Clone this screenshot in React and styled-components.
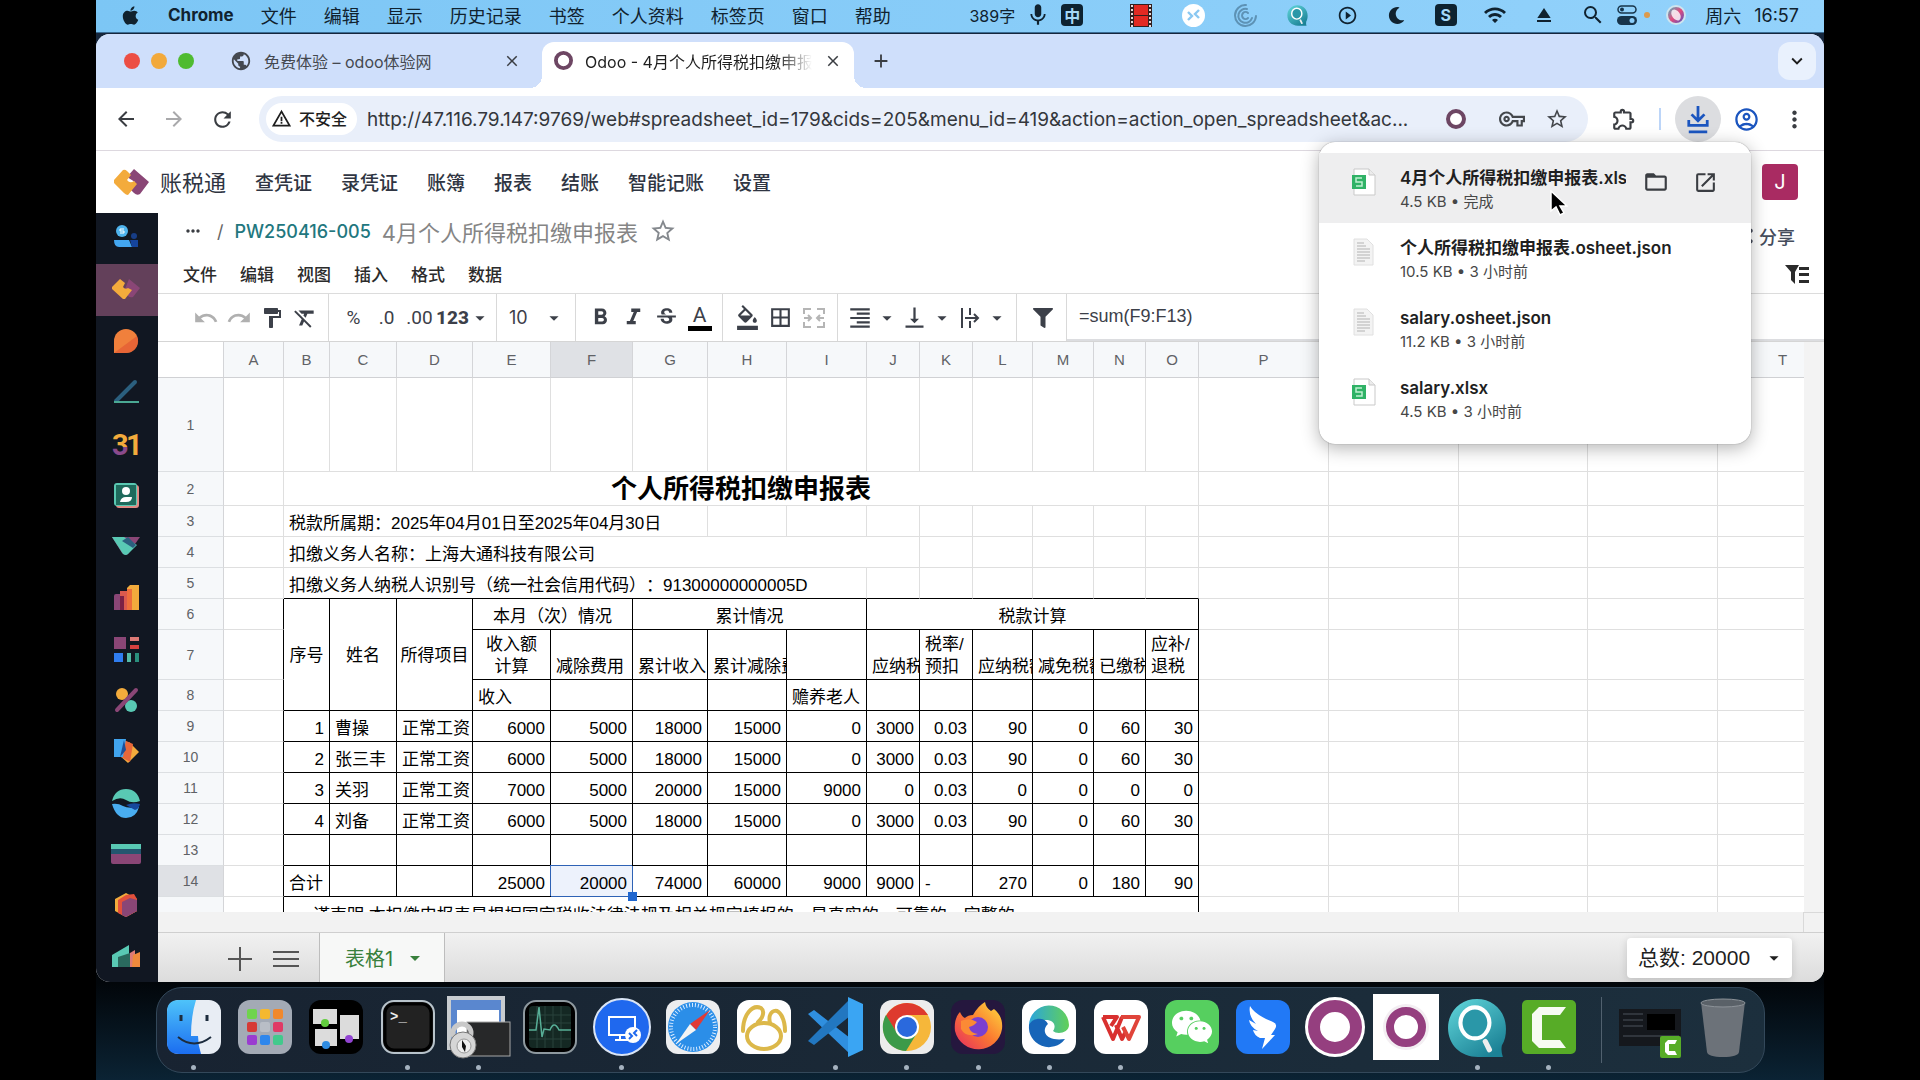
import React from 'react';
import styled, { createGlobalStyle } from 'styled-components';
import { FaApple, FaFilter, FaWeixin, FaMoon } from 'react-icons/fa';
import {
  MdArrowBack, MdArrowForward, MdRefresh, MdOutlineExtension, MdMoreVert, MdOutlineVpnKey,
  MdStarBorder, MdUndo, MdRedo, MdFormatPaint, MdFormatClear, MdFormatBold, MdFormatItalic,
  MdStrikethroughS, MdFormatColorFill, MdBorderAll, MdFormatAlignRight, MdVerticalAlignBottom,
  MdArrowDropDown, MdPublic, MdFolderOpen, MdOpenInNew, MdMic, MdWifi, MdEject, MdSearch,
  MdWarningAmber, MdPlayCircleOutline, MdClose, MdAdd, MdKeyboardArrowDown,
  MdMoreHoriz, MdShare, MdOutlineAccountCircle,
} from 'react-icons/md';

const sheetColumns = [
  ['A', 60], ['B', 46], ['C', 67], ['D', 76], ['E', 78], ['F', 82], ['G', 75], ['H', 79],
  ['I', 80], ['J', 53], ['K', 53], ['L', 60], ['M', 61], ['N', 52], ['O', 53], ['P', 130],
  ['Q', 130], ['R', 129], ['S', 130], ['T', 130],
];

const employees = [
  [9, '1', '曹操', '正常工资', '6000', '5000', '18000', '15000', '0', '3000', '0.03', '90', '0', '60', '30'],
  [10, '2', '张三丰', '正常工资', '6000', '5000', '18000', '15000', '0', '3000', '0.03', '90', '0', '60', '30'],
  [11, '3', '关羽', '正常工资', '7000', '5000', '20000', '15000', '9000', '0', '0.03', '0', '0', '0', '0'],
  [12, '4', '刘备', '正常工资', '6000', '5000', '18000', '15000', '0', '3000', '0.03', '90', '0', '60', '30'],
];

const downloads = [
  { name: '4月个人所得税扣缴申报表.xlsx', info: '4.5 KB • 完成', kind: 'xlsx', active: true },
  { name: '个人所得税扣缴申报表.osheet.json', info: '10.5 KB • 3 小时前', kind: 'json' },
  { name: 'salary.osheet.json', info: '11.2 KB • 3 小时前', kind: 'json' },
  { name: 'salary.xlsx', info: '4.5 KB • 3 小时前', kind: 'xlsx' },
];

/* ---------- small drawings ---------- */

const Ring = ({ size }) => (
  <svg width={size} height={size} viewBox="0 0 20 20">
    <circle cx="10" cy="10" r="8" fill="#fff" stroke="#6d4663" strokeWidth="4" />
  </svg>
);

const HandsLogo = ({ width, height }) => (
  <svg width={width} height={height} viewBox="0 0 36 26">
    <path d="M21 0 L36 13 L27 25 Q24 27 21 24 L16 19 L22 13 L14 8 Z" fill="#8a4676" />
    <path d="M1 11 L10 1 Q12 0 14 2 L18 6 L14 11 Q17 15 21 12 L24 15 L15 26 Q13 26 11 24 L1 14 Z" fill="#f3ab3c" />
  </svg>
);

const FilmIcon = () => (
  <svg width="22" height="23" viewBox="0 0 22 23">
    <rect width="22" height="23" fill="#33201f" />
    <rect x="4" y="1" width="14" height="10" fill="#e22a22" />
    <rect x="4" y="12" width="14" height="10" fill="#e22a22" />
    <path d="M2 1V23M20 1V23" stroke="#e9dcdc" strokeWidth="2" strokeDasharray="2 2" />
  </svg>
);

const RemoteIcon = () => (
  <svg width="23" height="23" viewBox="0 0 23 23">
    <circle cx="11.5" cy="11.5" r="11.5" fill="#fff" />
    <path d="M6 8l4 4-4 4M17 6l-4 4 4 4" fill="none" stroke="#8ac8f2" strokeWidth="2.4" />
  </svg>
);

const SpiralIcon = () => (
  <svg width="23" height="23" viewBox="0 0 23 23" fill="none" stroke="#5d92b5" strokeWidth="2" strokeLinecap="round">
    <path d="M12 1A10.500 10.500 0 1 0 22 12" />
    <path d="M13 5A7 7 0 1 0 18 14" />
    <path d="M14 9A3.500 3.500 0 1 0 14 14" />
  </svg>
);

const QIcon = ({ size, height }) => (
  <svg width={size} height={height || size} viewBox="0 0 58 58">
    <defs>
      <linearGradient id="q" x1="0" y1="0" x2="0.700" y2="1">
        <stop offset="0" stopColor="#62d8dc" />
        <stop offset="1" stopColor="#1c8296" />
      </linearGradient>
    </defs>
    <path d="M29 1C13 1 1 13 1 29s12 28 29 28h24q-2-5-1-11c3-5 4-10 4-16C57 13 45 1 29 1z" fill="url(#q)" />
    <ellipse cx="27" cy="24" rx="14" ry="15" fill="#2a97a8" stroke="#fff" strokeWidth="4" />
    <path d="M37 42l4 8" stroke="#eee" strokeWidth="5" strokeLinecap="round" />
  </svg>
);

const ControlIcon = () => (
  <svg width="20" height="20" viewBox="0 0 20 20">
    <rect x="1" y="1" width="18" height="7" rx="3.500" fill="none" stroke="#17344a" strokeWidth="1.500" />
    <circle cx="5" cy="4.500" r="2" fill="#17344a" />
    <rect x="0" y="11" width="20" height="9" rx="4.500" fill="#17344a" />
    <circle cx="15" cy="15.500" r="2.500" fill="#8ccdf8" />
  </svg>
);

const SiriIcon = () => (
  <svg width="20" height="20" viewBox="0 0 20 20">
    <defs>
      <linearGradient id="siri" x1="0" y1="0" x2="1" y2="1">
        <stop offset="0" stopColor="#38c6c8" />
        <stop offset="0.500" stopColor="#e24b7d" />
        <stop offset="1" stopColor="#3b55c9" />
      </linearGradient>
    </defs>
    <circle cx="10" cy="10" r="9" fill="url(#siri)" stroke="#cfe4ee" strokeWidth="2" />
    <ellipse cx="10" cy="10" rx="4" ry="6" fill="#fff" opacity="0.800" transform="rotate(-35 10 10)" />
  </svg>
);

const DownloadIcon = () => (
  <svg width="24" height="32" viewBox="0 0 26 32" fill="none" stroke="#1b55bf" strokeWidth="3">
    <path d="M13 2v15M6 11l7 7 7-7M3 17v6h20v-6M3 30h20" />
  </svg>
);

const MergeIcon = () => (
  <svg width="22" height="22" viewBox="0 0 22 22" fill="none" stroke="#b5b5b5" strokeWidth="2">
    <path d="M1 7V2h7M14 2h7v5M21 15v5h-7M8 20H1v-5M1 11h7M21 11h-7M5 8l3 3-3 3M17 8l-3 3 3 3" />
  </svg>
);

const WrapIcon = () => (
  <svg width="20" height="22" viewBox="0 0 20 22" fill="none" stroke="#3c4049" strokeWidth="2">
    <path d="M2 1v20M10 1v7M10 14v7M5 11h13M14 7l4 4-4 4" />
  </svg>
);

const ListFilterIcon = () => (
  <svg width="24" height="20" viewBox="0 0 24 20" fill="#2b2b2b">
    <path d="M0 0h14l-4 7v12l-4-4V7zM14 2h10v3H14zM14 8h10v3H14zM14 15h10v3H14z" />
  </svg>
);

const FileIcon = ({ kind }) => (kind === 'xlsx' ? (
  <svg width="26" height="28" viewBox="0 0 26 28">
    <path d="M3 1h15l6 6v20H3z" fill="#fff" stroke="#c9c9c9" />
    <path d="M18 1v6h6" fill="#ececec" stroke="#c9c9c9" />
    <rect x="1" y="7" width="14" height="14" fill="#2fb266" />
    <path d="M11 10H5v4h6v4H5" fill="none" stroke="#bff0d0" strokeWidth="1.500" />
  </svg>
) : (
  <svg width="26" height="28" viewBox="0 0 26 28">
    <path d="M3 1h13l6 6v20H3z" fill="#f3f3f3" stroke="#e0e0e0" />
    <path d="M6 5h7M6 8h9M6 11h13M6 14h13M6 17h13M6 20h13M6 23h8" stroke="#b3b3b3" />
  </svg>
));

const Pointer = () => (
  <svg width="18" height="26" viewBox="0 0 18 26">
    <path d="M1 1v20l5-4 4 8 4-2-4-7h7z" fill="#000" stroke="#fff" strokeWidth="1.500" />
  </svg>
);

const appIcons = [
  <g key="pay">
    <circle cx="11" cy="7" r="6" fill="#4fb4ee" /><path d="M13 5H9v2h4v2H9" stroke="#fff" fill="none" />
    <path d="M3 16h15l3 7H8q-5 0-5-7z" fill="#43a6f0" /><circle cx="23" cy="12" r="3" fill="#173d86" />
    <path d="M19 16h8v7h-6z" fill="#15449c" />
  </g>,
  <g key="tax">
    <path d="M18 4l11 9-7 9q-3 1-5-1l-3-7z" fill="#8a4676" />
    <path d="M1 12L9 4l5 4-2 4q2 3 5 1l4 2-7 9h-2L1 14z" fill="#f3ab3c" />
  </g>,
  <g key="chat">
    <path d="M3 27V15A12 12 0 1 1 15 27z" fill="#f0803c" /><path d="M26 10A12 12 0 0 1 15 27H3z" fill="#e35a33" opacity="0.700" />
  </g>,
  <g key="sign">
    <path d="M5 24L24 5" stroke="#2b5f7e" strokeWidth="4" strokeLinecap="round" /><path d="M3 25h25" stroke="#4aa893" strokeWidth="2" />
  </g>,
  <g key="calendar">
    <defs>
      <linearGradient id="cal" x1="0" y1="0" x2="0" y2="1">
        <stop offset="0.550" stopColor="#f3ab3c" /><stop offset="0.550" stopColor="#8a4a8c" />
      </linearGradient>
    </defs>
    <text x="1" y="26" fontSize="29" fontWeight="700" fontFamily="Roboto, sans-serif" fill="url(#cal)">3</text>
    <text x="15" y="26" fontSize="29" fontWeight="700" fontFamily="Roboto, sans-serif" fill="#f3ab3c">1</text>
  </g>,
  <g key="contacts">
    <rect x="5" y="5" width="23" height="23" rx="3" fill="#e08a83" /><rect x="3" y="3" width="23" height="23" rx="3" fill="#5ac8b2" />
    <rect x="5" y="5" width="20" height="20" fill="#1f6a5c" /><circle cx="15" cy="11" r="4" fill="#fff" />
    <path d="M9 22q1-5 6-5h6q0 5-6 5z" fill="#fff" />
  </g>,
  <g key="crm">
    <path d="M1 6h28L17 23q-3 2-6-1z" fill="#8a4676" /><path d="M1 6h12l13 8-9 9q-2 2-5 0z" fill="#59c9b4" />
    <path d="M11 10l6-4 8 8-3 3z" fill="#2b5f7e" />
  </g>,
  <g key="sales">
    <path d="M3 14q0-2 2-2h7v16H3z" fill="#8a4676" /><path d="M9 9h8v19H9z" fill="#db5a4e" />
    <path d="M9 14h4v14H9z" fill="#7b2145" /><path d="M16 6l3-3h9v25H16z" fill="#f3ab3c" /><path d="M16 7h5v21h-5z" fill="#ee6e3c" />
  </g>,
  <g key="boards">
    <rect x="3" y="3" width="12" height="12" fill="#8a4676" /><rect x="19" y="3" width="9" height="4" fill="#dd7a76" />
    <rect x="19" y="11" width="9" height="4" fill="#d8413f" /><rect x="3" y="19" width="9" height="9" fill="#2f7df0" />
    <rect x="16" y="19" width="4" height="9" fill="#54bba8" /><rect x="24" y="19" width="4" height="9" fill="#2a8f7d" />
  </g>,
  <g key="percent">
    <circle cx="11" cy="9" r="6" fill="#f3ab3c" /><circle cx="20" cy="21" r="6" fill="#59c9b4" />
    <path d="M6 25L25 5" stroke="#8a4676" strokeWidth="4" strokeLinecap="round" />
  </g>,
  <g key="cards">
    <path d="M18 6l10 10-11 11-9-8z" fill="#f3ab3c" /><path d="M13 4l9 4-3 18-9-5z" fill="#e8673a" />
    <path d="M3 3h12l-3 18H3z" fill="#41a4ee" /><path d="M13 4l2 10-6 7z" fill="#1d4f9a" />
  </g>,
  <g key="wave">
    <path d="M1 13Q4 1 15 1t14 12q-8 3-14-1T1 13z" fill="#59c9b4" /><path d="M1 16q6-1 11 2t16 1q-3 11-13 11T1 16z" fill="#49adf0" />
    <path d="M15 17q7-3 14-1-1 5-5 6z" fill="#16489c" />
  </g>,
  <g key="card">
    <rect x="0" y="5" width="30" height="5" fill="#59c9b4" /><rect x="0" y="10" width="30" height="5" fill="#23566f" />
    <path d="M0 15h30v8q0 2-2 2H2q-2 0-2-2z" fill="#8a4676" />
  </g>,
  <g key="hexagon">
    <path d="M15 3l11 6v12l-11 6-11-6V9z" fill="#f3ab3c" /><path d="M15 5l8-1 3 5v12l-11 6-8-4V10z" fill="#e3503b" />
    <path d="M19 8l7 2v11l-11 6-4-2V12z" fill="#8a4676" />
  </g>,
  <g key="stock">
    <path d="M1 14L18 4v22H1z" fill="#59c9b4" /><path d="M7 16l12-4v14H7z" fill="#2a6a5e" />
    <path d="M19 12l5-3v17h-5z" fill="#dd7a76" /><path d="M22 14l7-3v15h-8z" fill="#ee8a3c" />
  </g>,
];

const dockIcons = [
  { name: '访达', running: true, art: (
    <>
      <defs><linearGradient id="fi" x1="0" y1="0" x2="0" y2="1"><stop offset="0" stopColor="#4ec3fa" /><stop offset="1" stopColor="#1b6df0" /></linearGradient></defs>
      <rect x="3" y="3" width="54" height="54" rx="12" fill="#e8edf4" />
      <path d="M32 3H15Q3 3 3 15v30q0 12 12 12h22q-3-9-3-18h-7q0-20 5-36z" fill="url(#fi)" />
      <path d="M17 18v6M43 18v6" stroke="#1d2c3d" strokeWidth="3" /><path d="M14 40q16 13 33 0" fill="none" stroke="#1d2c3d" strokeWidth="2" />
    </>
  ) },
  { name: '启动台', art: (
    <>
      <rect x="3" y="3" width="54" height="54" rx="12" fill="#a3aab5" />
      {['#6fd44d', '#f5b82f', '#f0882c', '#d63a35', '#b9bec6', '#e03a66', '#9a3cd0', '#2d86ec', '#41c98c'].map((c, i) => (
        <rect key={c} x={12 + (i % 3) * 13} y={12 + Math.floor(i / 3) * 13} width="10" height="10" rx="2" fill={c} />
      ))}
    </>
  ) },
  { name: '窗口', art: (
    <>
      <rect x="3" y="3" width="54" height="54" rx="12" fill="#000" />
      <rect x="7" y="12" width="24" height="15" fill="#dcdcdc" /><rect x="34" y="18" width="19" height="24" fill="#dcdcdc" />
      <rect x="9" y="32" width="22" height="17" fill="#dcdcdc" />
      <circle cx="19" cy="26" r="4" fill="#62ce3e" /><circle cx="43" cy="42" r="4" fill="#9244d2" /><circle cx="20" cy="48" r="4" fill="#2f8be0" />
    </>
  ) },
  { name: '终端', running: true, art: (
    <>
      <rect x="4" y="4" width="52" height="52" rx="12" fill="#1f1f20" stroke="#b8c3cb" strokeWidth="2" />
      <rect x="7" y="7" width="46" height="46" rx="9" fill="#222" stroke="#000" strokeWidth="3" />
      <text x="12" y="24" fontSize="14" fontWeight="700" fontFamily="Liberation Mono, monospace" fill="#eee">&gt;_</text>
    </>
  ) },
  { name: '屏幕锁定', running: true, art: (
    <>
      <rect x="-2" y="-1" width="58" height="54" fill="#c8ccd0" /><rect x="2" y="3" width="50" height="42" fill="#5a87cf" />
      <rect x="8" y="13" width="42" height="30" fill="#fff" /><rect x="18" y="25" width="43" height="34" fill="#272829" stroke="#a7a7a7" />
      <circle cx="13" cy="36" r="9" fill="none" stroke="#c9c9c9" strokeWidth="5" />
      <circle cx="14" cy="48" r="13" fill="#d6d6d6" stroke="#777" /><circle cx="15" cy="49" r="7" fill="#eee" stroke="#999" />
      <path d="M13 43l4 6-1 6-3-5z" fill="#111" />
    </>
  ) },
  { name: '活动监视器', art: (
    <>
      <rect x="4" y="4" width="52" height="52" rx="12" fill="#000" stroke="#8e999f" strokeWidth="2" />
      <rect x="9" y="9" width="42" height="42" rx="4" fill="#142823" />
      <path d="M9 18h42M9 26h42M9 42h42M17 9v42M25 9v42M33 9v42M41 9v42" stroke="#28423c" />
      <path d="M9 33h7l3-23 3 30 2-8 6 1q4-10 9 0h12" fill="none" stroke="#57ae96" strokeWidth="1.500" />
    </>
  ) },
  { name: '远程桌面', running: true, art: (
    <>
      <circle cx="30" cy="30" r="28" fill="#1f68ee" stroke="#d9e4f5" strokeWidth="2" />
      <path d="M17 20h26v18H17zM23 43h14M28 38v5" fill="none" stroke="#fff" strokeWidth="2" />
      <circle cx="41" cy="38" r="8" fill="#fff" /><path d="M37 36l3 3-3 3M45 33l-3 3 3 3" fill="none" stroke="#1f68ee" strokeWidth="2" />
    </>
  ) },
  { name: 'Safari', art: (
    <>
      <rect x="3" y="3" width="54" height="54" rx="12" fill="#ecedef" /><circle cx="30" cy="30" r="25" fill="#2b8ee8" />
      <circle cx="30" cy="30" r="22" fill="none" stroke="#dcecff" strokeWidth="4" strokeDasharray="1 2" />
      <path d="M47 13L27 27l6 6z" fill="#e03a36" /><path d="M13 47l14-20 6 6z" fill="#f4f4f4" />
    </>
  ) },
  { name: 'Navicat', art: (
    <>
      <rect x="3" y="3" width="54" height="54" rx="12" fill="#fff" />
      <g fill="none" stroke="#dcb84a" strokeWidth="4" strokeLinecap="round">
        <ellipse cx="30" cy="39" rx="17" ry="13" /><path d="M9 34c0-16 9-27 18-23 4 3 2 10-3 14" />
        <path d="M51 34c0-13-6-22-11-20-5 2-5 8-4 12" />
      </g>
    </>
  ) },
  { name: 'VS Code', running: true, art: (
    <>
      <path d="M3 17l6-4 36 28v16z" fill="#2f8fdf" /><path d="M3 44l6 4L45 19V2z" fill="#2277c0" />
      <path d="M43 0l15 7v46l-15 7z" fill="#3aa5f3" />
    </>
  ) },
  { name: 'Chrome', running: true, art: (
    <>
      <rect x="3" y="3" width="54" height="54" rx="12" fill="#ececec" />
      <circle cx="30" cy="30" r="24" fill="#f6b73a" />
      <path d="M30 6a24 24 0 0 0-21 13l11 17 10-18h21A24 24 0 0 0 30 6z" fill="#de3a2e" />
      <path d="M9 18a24 24 0 0 0 20 36l11-18H20z" fill="#3c9a49" />
      <circle cx="30" cy="30" r="12" fill="#fff" /><circle cx="30" cy="30" r="10" fill="#2a69dd" />
    </>
  ) },
  { name: 'Firefox', running: true, art: (
    <>
      <defs><linearGradient id="ff" x1="1" y1="0" x2="0" y2="1"><stop offset="0" stopColor="#fde13e" /><stop offset="0.500" stopColor="#fb7a30" /><stop offset="1" stopColor="#e52a62" /></linearGradient></defs>
      <rect x="3" y="3" width="54" height="54" rx="12" fill="#25173e" />
      <path d="M12 15q2 5 5 6 3-3 8-3 5-9 12-13 1 6 6 9l3-2c6 5 9 11 8 20a24 24 0 0 1-47 2c-1-8 1-15 5-19z" fill="url(#ff)" />
      <circle cx="30" cy="30" r="10" fill="#7a3fd0" /><path d="M13 24q8-4 16 1-3 4-8 5 1 6 9 7-12 4-17-5z" fill="#fb8a35" />
    </>
  ) },
  { name: 'Edge', running: true, art: (
    <>
      <defs><linearGradient id="ed" x1="0" y1="0" x2="1" y2="0"><stop offset="0" stopColor="#2aa5dc" /><stop offset="1" stopColor="#62d058" /></linearGradient></defs>
      <rect x="3" y="3" width="54" height="54" rx="12" fill="#fff" />
      <path d="M10 29a20 20 0 0 1 40-1c0 8-12 10-16 6 4-6 0-11-7-11-8 0-17 3-17 10z" fill="url(#ed)" />
      <path d="M10 28c4-8 16-8 19-1-7 6-3 18 17 15A20 20 0 0 1 10 28z" fill="#1765b8" />
    </>
  ) },
  { name: 'WPS', running: true, art: (
    <>
      <rect x="3" y="3" width="54" height="54" rx="12" fill="#fff" />
      <path d="M12 20h14l-6 9M12 20l10 22 9-22M25 28l6 14 3-6" fill="none" stroke="#d9302f" strokeWidth="4" strokeLinejoin="round" />
      <path d="M30 20h18L38 42l-6-12" fill="none" stroke="#e0443a" strokeWidth="4" strokeLinejoin="round" />
    </>
  ) },
  { name: '微信', art: (
    <>
      <rect x="3" y="3" width="54" height="54" rx="12" fill="#56cf5f" />
      <g color="#fff"><FaWeixin x="9" y="9" size="42" /></g>
    </>
  ) },
  { name: '钉钉', art: (
    <>
      <rect x="3" y="3" width="54" height="54" rx="12" fill="#2179f6" />
      <path d="M17 9q5 9 23 16 5 2 2 7l-4 6h4L29 52l3-11h-5q-6-3-7-8l5 1q-8-4-9-11l7 4Q15 19 17 9z" fill="#fff" />
    </>
  ) },
  { name: 'Odoo', art: (
    <><circle cx="30" cy="30" r="30" fill="#fff" /><circle cx="30" cy="30" r="21" fill="#fff" stroke="#953f7f" strokeWidth="12" /></>
  ) },
  { name: 'Odoo 应用', art: (
    <><rect x="-3" y="-3" width="66" height="66" fill="#fff" /><circle cx="30" cy="30" r="23" fill="#f3eef2" /><circle cx="30" cy="30" r="16" fill="#fff" stroke="#953f7f" strokeWidth="8" /></>
  ) },
  { name: '截图', running: true, art: <QIcon size="60" height="62" /> },
  { name: 'Camtasia', running: true, art: (
    <>
      <rect x="3" y="3" width="54" height="54" rx="5" fill="#57ac27" />
      <path d="M47 10H20l-7 7v27l7 7h27l-6-8H23V18h18z" fill="#f6fbf2" />
    </>
  ) },
];

/* ---------- grid pieces ---------- */

const EmptyCells = ({ count }) => Array.from({ length: count }, (_, i) => <Cell key={i} />);

const LinedRow = ({ number, children, height = 31, selected }) => (
  <GridRow $height={height}>
    <RowHead scope="row" $selected={selected}>{number}</RowHead>
    {children}
  </GridRow>
);

const Sheet = () => (
  <SheetTable>
    <colgroup>
      <SheetCol $width={66} />
      {sheetColumns.map(([letter, width]) => <SheetCol key={letter} $width={width} />)}
    </colgroup>
    <thead>
      <GridRow $height={36}>
        <Corner />
        {sheetColumns.map(([letter]) => <ColHead key={letter} scope="col" $selected={letter === 'F'}>{letter}</ColHead>)}
      </GridRow>
    </thead>
    <tbody>
      <LinedRow number="1" height={94}><EmptyCells count={20} /></LinedRow>
      <LinedRow number="2" height={34}>
        <Cell />
        <TitleCell colSpan={14}>个人所得税扣缴申报表</TitleCell>
        <EmptyCells count={5} />
      </LinedRow>
      <LinedRow number="3">
        <Cell />
        <Cell colSpan={6}>税款所属期：2025年04月01日至2025年04月30日</Cell>
        <EmptyCells count={13} />
      </LinedRow>
      <LinedRow number="4">
        <Cell />
        <Cell colSpan={9}>扣缴义务人名称：上海大通科技有限公司</Cell>
        <EmptyCells count={10} />
      </LinedRow>
      <LinedRow number="5">
        <Cell />
        <Cell colSpan={8} $under>扣缴义务人纳税人识别号（统一社会信用代码）：91300000000005D</Cell>
        {Array.from({ length: 6 }, (_, i) => <Cell key={i} $under />)}
        <EmptyCells count={5} />
      </LinedRow>
      <LinedRow number="6">
        <Cell $side />
        <Cell rowSpan={3} $boxed $align="center" $middle>序号</Cell>
        <Cell rowSpan={3} $boxed $align="center" $middle>姓名</Cell>
        <Cell rowSpan={3} $boxed $align="center" $middle>所得项目</Cell>
        <Cell colSpan={2} $boxed $align="center">本月（次）情况</Cell>
        <Cell colSpan={3} $boxed $align="center">累计情况</Cell>
        <Cell colSpan={6} $boxed $align="center">税款计算</Cell>
        <EmptyCells count={5} />
      </LinedRow>
      <LinedRow number="7" height={50}>
        <Cell $side />
        <Cell $boxed $align="center">收入额<br />计算</Cell>
        {['减除费用', '累计收入', '累计减除费', '', '应纳税'].map((text) => <Cell key={text} $boxed>{text}</Cell>)}
        <Cell $boxed>税率/<br />预扣</Cell>
        <Cell $boxed>应纳税额</Cell>
        <Cell $boxed>减免税额</Cell>
        <Cell $boxed>已缴税</Cell>
        <Cell $boxed>应补/<br />退税</Cell>
        <EmptyCells count={5} />
      </LinedRow>
      <LinedRow number="8">
        <Cell $side />
        {['收入', '', '', '', '赡养老人', '', '', '', '', '', ''].map((text, i) => <Cell key={i} $boxed>{text}</Cell>)}
        <EmptyCells count={5} />
      </LinedRow>
      {employees.map(([number, ...values]) => (
        <LinedRow key={number} number={number}>
          <Cell $side />
          {values.map((value, i) => (
            <Cell key={i} $boxed $align={i === 1 || i === 2 ? 'left' : 'right'}>{value}</Cell>
          ))}
          <EmptyCells count={5} />
        </LinedRow>
      ))}
      <LinedRow number="13">
        <Cell $side />
        {Array.from({ length: 14 }, (_, i) => <Cell key={i} $boxed />)}
        <EmptyCells count={5} />
      </LinedRow>
      <LinedRow number="14" selected>
        <Cell $side />
        <Cell $boxed>合计</Cell>
        <Cell $boxed />
        <Cell $boxed />
        <Cell $boxed $align="right">25000</Cell>
        <SelectedCell $boxed $align="right">20000<Handle /></SelectedCell>
        {['74000', '60000', '9000', '9000', '-', '270', '0', '180', '90'].map((value, i) => (
          <Cell key={i} $boxed $align={value === '-' ? 'left' : 'right'}>{value}</Cell>
        ))}
        <EmptyCells count={5} />
      </LinedRow>
      <LinedRow number="">
        <Cell $side />
        <NoteCell colSpan={14} $boxed>谨声明:本扣缴申报表是根据国家税收法律法规及相关规定填报的，是真实的、可靠的、完整的。</NoteCell>
        <EmptyCells count={5} />
      </LinedRow>
    </tbody>
  </SheetTable>
);

const App = () => (
  <Screen>
    <GlobalStyle />
    <Desktop>
      <MenuBar>
        <MenuButton aria-label="苹果菜单"><FaApple size={21} /></MenuButton>
        <MenuButton $strong>Chrome</MenuButton>
        {['文件', '编辑', '显示', '历史记录', '书签', '个人资料', '标签页', '窗口', '帮助'].map((label) => (
          <MenuButton key={label}>{label}</MenuButton>
        ))}
        <StatusArea>
          <StatusText>389字</StatusText>
          <StatusSlot $width={46}><MdMic size={26} /></StatusSlot>
          <DarkBadge>中</DarkBadge>
          <StatusGap />
          <StatusSlot $width={52}><FilmIcon /></StatusSlot>
          <StatusSlot $width={52}><RemoteIcon /></StatusSlot>
          <StatusSlot $width={52}><SpiralIcon /></StatusSlot>
          <StatusSlot $width={52}><QIcon size="21" /></StatusSlot>
          <StatusSlot $width={49}><MdPlayCircleOutline size={21} /></StatusSlot>
          <StatusSlot $width={49}><FaMoon size={17} /></StatusSlot>
          <StatusSlot $width={49}><DarkBadge>S</DarkBadge></StatusSlot>
          <StatusSlot $width={49}><MdWifi size={24} /></StatusSlot>
          <StatusSlot $width={49}><MdEject size={24} /></StatusSlot>
          <StatusSlot $width={49}><MdSearch size={24} /></StatusSlot>
          <ControlIcon />
          <OrangeDot />
          <SiriIcon />
          <Clock><span>周六</span><span>16:57</span></Clock>
        </StatusArea>
      </MenuBar>

      <Window>
        <TabStrip>
          <Lights><Light $color="#ec4e44" aria-label="关闭" /><Light $color="#f2a93b" aria-label="最小化" /><Light $color="#4fbb30" aria-label="缩放" /></Lights>
          <Tab>
            <MdPublic size={22} />
            <TabTitle>免费体验 – odoo体验网</TabTitle>
            <IconButton aria-label="关闭标签页"><MdClose size={18} /></IconButton>
          </Tab>
          <Tab $active>
            <Ring size={19} />
            <TabTitle $fade>Odoo - 4月个人所得税扣缴申报表</TabTitle>
            <IconButton aria-label="关闭标签页"><MdClose size={18} /></IconButton>
          </Tab>
          <NewTab aria-label="新标签页"><MdAdd size={22} /></NewTab>
          <TabSearch aria-label="搜索标签页"><MdKeyboardArrowDown size={22} /></TabSearch>
        </TabStrip>

        <AddressRow>
          <NavButton aria-label="后退"><MdArrowBack size={24} /></NavButton>
          <NavButton aria-label="前进" disabled><MdArrowForward size={24} /></NavButton>
          <NavButton aria-label="重新加载"><MdRefresh size={25} /></NavButton>
          <AddressBar>
            <SiteChip><MdWarningAmber size={21} />不安全</SiteChip>
            <AddressInput
              aria-label="地址"
              readOnly
              value="http://47.116.79.147:9769/web#spreadsheet_id=179&cids=205&menu_id=419&action=action_open_spreadsheet&ac..."
            />
            <AddressIcons>
              <Ring size={20} />
              <MdOutlineVpnKey size={26} />
              <MdStarBorder size={24} />
            </AddressIcons>
          </AddressBar>
          <BrowserTools>
            <IconButton aria-label="扩展程序"><MdOutlineExtension size={26} /></IconButton>
            <ToolRule />
            <DownloadButton aria-label="下载"><DownloadIcon /></DownloadButton>
            <ProfileButton aria-label="个人资料"><MdOutlineAccountCircle size={27} /></ProfileButton>
            <IconButton aria-label="更多"><MdMoreVert size={27} /></IconButton>
          </BrowserTools>
        </AddressRow>

        <OdooNav>
          <HandsLogo width="36" height="26" />
          <Brand href="#home">账税通</Brand>
          <NavLinks>
            {['查凭证', '录凭证', '账簿', '报表', '结账', '智能记账', '设置'].map((label) => (
              <NavLink key={label} href="#menu">{label}</NavLink>
            ))}
          </NavLinks>
          <Avatar aria-label="用户">J</Avatar>
        </OdooNav>

        <Workspace>
          <AppRail>
            {appIcons.map((art, i) => (
              <RailLink key={art.key} href="#app" aria-label={art.key} $active={i === 1}>
                <svg width="30" height="30" viewBox="0 0 30 30">{art}</svg>
              </RailLink>
            ))}
          </AppRail>

          <Main>
            <Crumbs>
              <IconButton aria-label="更多"><MdMoreHoriz size={20} /></IconButton>
              <Slash>/</Slash>
              <CrumbLink href="#order">PW250416-005</CrumbLink>
              <DocTitle>4月个人所得税扣缴申报表</DocTitle>
              <StarButton aria-label="收藏"><MdStarBorder size={28} /></StarButton>
              <ShareButton><MdShare size={18} />分享</ShareButton>
            </Crumbs>
            <SheetMenu>
              {['文件', '编辑', '视图', '插入', '格式', '数据'].map((label) => <SheetMenuButton key={label}>{label}</SheetMenuButton>)}
              <FilterButton aria-label="筛选"><ListFilterIcon /></FilterButton>
            </SheetMenu>
            <Toolbar>
              <ToolGroup $width={171} $start={31}>
                <Tool $dim aria-label="撤销"><MdUndo size={26} /></Tool>
                <Tool $dim aria-label="重做"><MdRedo size={26} /></Tool>
                <Tool aria-label="格式刷"><MdFormatPaint size={24} /></Tool>
                <Tool aria-label="清除格式"><MdFormatClear size={26} /></Tool>
              </ToolGroup>
              <ToolGroup $width={168} $start={8}>
                <Tool>%</Tool>
                <Tool>.0</Tool>
                <Tool>.00</Tool>
                <Tool $heavy>123</Tool>
                <Caret size={22} />
              </ToolGroup>
              <ToolGroup $width={79} $start={12}>
                <SizeInput aria-label="字号" defaultValue="10" />
                <SizeCaret size={22} />
              </ToolGroup>
              <ToolGroup $width={147} $start={8}>
                <Tool aria-label="加粗"><MdFormatBold size={27} /></Tool>
                <Tool aria-label="斜体"><MdFormatItalic size={27} /></Tool>
                <Tool aria-label="删除线"><MdStrikethroughS size={25} /></Tool>
                <Tool><ColorLetter>A</ColorLetter></Tool>
              </ToolGroup>
              <ToolGroup $width={115} $start={8}>
                <Tool aria-label="填充颜色"><MdFormatColorFill size={25} /></Tool>
                <Tool aria-label="边框"><MdBorderAll size={25} /></Tool>
                <Tool $dim aria-label="合并单元格"><MergeIcon /></Tool>
              </ToolGroup>
              <ToolGroup $width={179} $start={5}>
                <Tool aria-label="水平对齐"><MdFormatAlignRight size={26} /></Tool>
                <Caret size={22} />
                <Tool aria-label="垂直对齐"><MdVerticalAlignBottom size={27} /></Tool>
                <Caret size={22} />
                <Tool aria-label="换行"><WrapIcon /></Tool>
                <Caret size={22} />
              </ToolGroup>
              <ToolGroup $width={50} $start={9}>
                <Tool aria-label="筛选"><FaFilter size={20} /></Tool>
              </ToolGroup>
              <FormulaInput aria-label="公式" defaultValue="=sum(F9:F13)" />
            </Toolbar>

            <SheetArea>
              <SheetView><Sheet /></SheetView>
              <VerticalTrack />
            </SheetArea>
            <HorizontalTrack><TrackCorner /></HorizontalTrack>
            <BottomBar>
              <BottomButton aria-label="新增表格">
                <svg width="26" height="26" viewBox="0 0 26 26" stroke="#555" strokeWidth="2"><path d="M13 1v24M1 13h24" /></svg>
              </BottomButton>
              <BottomButton aria-label="表格列表">
                <svg width="26" height="18" viewBox="0 0 26 18" stroke="#555" strokeWidth="2"><path d="M0 2h26M0 9h26M0 16h26" /></svg>
              </BottomButton>
              <SheetTab>表格1<MdArrowDropDown size={24} /></SheetTab>
              <TotalBox>
                <TotalSelect aria-label="统计"><option>总数: 20000</option></TotalSelect>
                <MdArrowDropDown size={22} />
              </TotalBox>
            </BottomBar>
          </Main>
        </Workspace>

        <DownloadPanel>
          {downloads.map((file) => (
            <DownloadItem key={file.name} $active={file.active}>
              <FileIcon kind={file.kind} />
              <FileText>
                <FileName>{file.name}</FileName>
                <FileInfo>{file.info}</FileInfo>
              </FileText>
              {file.active && (
                <FileActions>
                  <IconButton aria-label="在文件夹中显示"><MdFolderOpen size={26} /></IconButton>
                  <IconButton aria-label="打开"><MdOpenInNew size={25} /></IconButton>
                </FileActions>
              )}
            </DownloadItem>
          ))}
          <PointerSpot><Pointer /></PointerSpot>
        </DownloadPanel>
      </Window>

      <Dock>
        {dockIcons.map((item) => (
          <DockItem key={item.name} aria-label={item.name}>
            <DockArt viewBox="0 0 60 60">{item.art}</DockArt>
            {item.running && <RunDot />}
          </DockItem>
        ))}
        <DockRule />
        <DockItem aria-label="Camtasia 窗口">
          <DockArt viewBox="0 0 60 60">
            <rect x="-2" y="12" width="62" height="37" fill="#15181d" />
            <rect x="26" y="17" width="28" height="16" fill="#000" />
            <path d="M2 17h20M2 23h20M2 29h20M2 39h56" stroke="#30353c" strokeWidth="2" />
            <rect x="39" y="39" width="21" height="22" rx="2" fill="#57ac27" />
            <path d="M56 43H47l-3 3v9l3 3h9l-2-4h-6v-7h6z" fill="#fff" />
          </DockArt>
        </DockItem>
        <DockItem aria-label="废纸篓">
          <DockArt viewBox="0 0 60 60">
            <path d="M8 5h44l-6 50q-1 5-16 5t-16-5z" fill="#6c7279" /><ellipse cx="30" cy="6" rx="22" ry="4" fill="#5a6168" stroke="#8d9399" />
          </DockArt>
        </DockItem>
      </Dock>
    </Desktop>
  </Screen>
);

export default App;

/* ---------- styles ---------- */

const GlobalStyle = createGlobalStyle`
  * {
    box-sizing: border-box;
  }

  body {
    margin: 0;
    background: #000;
    font-family: Inter, "Noto Sans CJK SC", sans-serif;
    color: #1f1f1f;
  }

  button, input, select {
    font: inherit;
    color: inherit;
    border: 0;
    padding: 0;
    margin: 0;
    background: none;
    outline: none;
  }

  a {
    color: inherit;
    text-decoration: none;
  }

  svg {
    flex-shrink: 0;
    display: block;
  }
`;

const Screen = styled.div`
  padding: 0 5%;
  background: #000;
`;

const Desktop = styled.div`
  height: 100vh;
  display: flex;
  flex-direction: column;
  overflow: hidden;
  background: linear-gradient(#16263c 0, #16263c 60px, #03070b 300px, #02060a 91%, #0b2334 100%);
`;

const MenuBar = styled.header`
  height: 33px;
  flex-shrink: 0;
  display: flex;
  align-items: center;
  gap: 27px;
  padding: 0 25px 2px 24px;
  background: linear-gradient(90deg, #7cc6f5, #93d2fb);
  border-bottom: 1px solid #3a6c94;
  font-size: 18px;
  color: #10222f;
`;

const MenuButton = styled.button`
  white-space: nowrap;
  font-size: ${({ $strong }) => ($strong ? 17 : 18)}px;
  font-weight: ${({ $strong }) => ($strong ? 700 : 400)};
`;

const StatusArea = styled.div`
  display: flex;
  align-items: center;
  margin-left: auto;
`;

const StatusText = styled.span`
  font-size: 16px;
`;

const StatusSlot = styled.span`
  width: ${({ $width }) => $width}px;
  display: flex;
  justify-content: center;
`;

const StatusGap = styled.span`
  width: 32px;
`;

const DarkBadge = styled.span`
  width: 22px;
  height: 22px;
  display: flex;
  align-items: center;
  justify-content: center;
  border-radius: 4px;
  background: #0d2230;
  color: #a5d8f7;
  font-size: 16px;
  font-weight: 700;
`;

const OrangeDot = styled.span`
  width: 6px;
  height: 6px;
  margin: 0 16px 0 7px;
  border-radius: 50%;
  background: #dc9a4c;
`;

const Clock = styled.span`
  display: flex;
  align-items: center;
  gap: 13px;
  margin-left: 19px;
`;

const Window = styled.main`
  position: relative;
  flex: 1;
  min-height: 0;
  display: flex;
  flex-direction: column;
  margin-top: 1px;
  border-radius: 14px;
  overflow: hidden;
  background: #fff;
`;

const TabStrip = styled.div`
  height: 54px;
  flex-shrink: 0;
  display: flex;
  align-items: flex-end;
  background: #cfdffb;
  padding: 0 8px 0 28px;
`;

const Lights = styled.div`
  height: 54px;
  display: flex;
  align-items: center;
  gap: 11px;
  margin-right: 24px;
`;

const Light = styled.button`
  width: 16px;
  height: 16px;
  border-radius: 50%;
  background: ${({ $color }) => $color};
`;

const Tab = styled.div`
  position: relative;
  height: 46px;
  width: ${({ $active }) => ($active ? 312 : 324)}px;
  display: flex;
  align-items: center;
  gap: 12px;
  padding: ${({ $active }) => ($active ? '0 12px 9px 12px' : '0 21px 9px 12px')};
  font-size: 16px;
  color: ${({ $active }) => ($active ? '#1f1f1f' : '#44484f')};
  background: ${({ $active }) => ($active ? '#fff' : 'transparent')};
  border-radius: 12px 12px 0 0;

  ${({ $active }) => $active && `
    &::before, &::after {
      content: '';
      position: absolute;
      bottom: 0;
      width: 12px;
      height: 12px;
    }
    &::before {
      right: 100%;
      background: radial-gradient(circle at 0 0, transparent 12px, #fff 12px);
    }
    &::after {
      left: 100%;
      background: radial-gradient(circle at 100% 0, transparent 12px, #fff 12px);
    }
  `}
`;

const TabTitle = styled.span`
  flex: 1;
  overflow: hidden;
  white-space: nowrap;
  mask-image: ${({ $fade }) => ($fade ? 'linear-gradient(90deg, #000 85%, transparent)' : 'none')};
`;

const IconButton = styled.button`
  display: flex;
  align-items: center;
  color: #3a3d42;
`;

const NewTab = styled(IconButton)`
  align-self: center;
  margin-left: 16px;
`;

const TabSearch = styled(IconButton)`
  width: 38px;
  height: 38px;
  align-self: center;
  justify-content: center;
  margin-left: auto;
  border-radius: 12px;
  background: #e9f1fd;
  color: #1f1f1f;
`;

const AddressRow = styled.div`
  height: 63px;
  flex-shrink: 0;
  display: flex;
  align-items: center;
  padding: 0 16px;
  border-bottom: 1px solid #ddd8df;
`;

const NavButton = styled(IconButton)`
  margin: 0 24px 0 0;

  &:first-child {
    margin-left: 2px;
  }

  &:disabled {
    color: #a9a9ab;
  }
`;

const AddressBar = styled.div`
  flex: 1;
  height: 46px;
  display: flex;
  align-items: center;
  gap: 10px;
  padding: 0 19px 0 7px;
  border-radius: 23px;
  background: #e9effa;
`;

const SiteChip = styled.button`
  height: 32px;
  display: flex;
  align-items: center;
  gap: 7px;
  padding: 0 10px 2px 5px;
  border-radius: 16px;
  background: #fff;
  font-size: 16px;
  font-weight: 500;
  white-space: nowrap;
`;

const AddressInput = styled.input`
  flex: 1;
  min-width: 0;
  font-size: 19px;
  color: #34373c;
  text-overflow: ellipsis;
`;

const AddressIcons = styled.div`
  display: flex;
  align-items: center;
  gap: 20px;
  color: #44474c;

  svg:first-child {
    margin-right: 13px;
  }
`;

const BrowserTools = styled.div`
  display: flex;
  align-items: center;
  margin-left: 23px;
`;

const ToolRule = styled.span`
  width: 2px;
  height: 22px;
  margin: 0 14px 0 22px;
  background: #bcd5f8;
`;

const DownloadButton = styled(IconButton)`
  width: 46px;
  height: 46px;
  justify-content: center;
  border-radius: 50%;
  background: #dcdde0;
`;

const ProfileButton = styled(IconButton)`
  margin: 0 21px 0 12px;
  color: #1b55bf;
`;

const OdooNav = styled.nav`
  height: 62px;
  flex-shrink: 0;
  display: flex;
  align-items: center;
  padding: 0 26px 0 17px;
  color: #2f3542;
`;

const Brand = styled.a`
  margin-left: 11px;
  padding-bottom: 2px;
  font-size: 22px;
`;

const NavLinks = styled.div`
  flex: 1;
  display: flex;
  gap: 29px;
  margin-left: 29px;
  padding-bottom: 2px;
`;

const NavLink = styled.a`
  font-size: 19px;
  font-weight: 500;
`;

const Avatar = styled.button`
  width: 36px;
  height: 36px;
  border-radius: 4px;
  background: #a92b62;
  color: #fff;
  font-size: 20px;
`;

const Workspace = styled.div`
  flex: 1;
  min-height: 0;
  display: flex;
`;

const AppRail = styled.nav`
  width: 62px;
  flex-shrink: 0;
  display: flex;
  flex-direction: column;
  background: #111722;
`;

const RailLink = styled.a`
  flex: 1;
  display: flex;
  align-items: center;
  justify-content: center;
  padding-right: 2px;
  background: ${({ $active }) => ($active ? '#63405a' : 'transparent')};
`;

const Main = styled.section`
  flex: 1;
  min-width: 0;
  display: flex;
  flex-direction: column;
`;

const Crumbs = styled.div`
  height: 38px;
  flex-shrink: 0;
  display: flex;
  align-items: center;
  padding: 0 29px 2px 25px;
`;

const Slash = styled.span`
  margin: 0 11px 0 14px;
  font-size: 18px;
  color: #666;
`;

const CrumbLink = styled.a`
  font-size: 18px;
  font-weight: 500;
  color: #22777e;
`;

const DocTitle = styled.span`
  margin-left: 11px;
  font-size: 22px;
  color: #858585;
`;

const StarButton = styled(IconButton)`
  margin-left: 11px;
  color: #85898e;
`;

const ShareButton = styled(IconButton)`
  gap: 4px;
  margin-left: auto;
  padding-top: 10px;
  font-size: 18px;
  font-weight: 500;
  color: #454c5c;
`;

const SheetMenu = styled.div`
  height: 43px;
  flex-shrink: 0;
  display: flex;
  align-items: center;
  gap: 23px;
  padding: 2px 15px 0 25px;
  border-bottom: 1px solid #dcdcdc;
`;

const SheetMenuButton = styled.button`
  font-size: 17px;
  font-weight: 500;
  color: #2b2b2b;
`;

const FilterButton = styled(IconButton)`
  margin-left: auto;
  padding-top: 4px;
`;

const Toolbar = styled.div`
  height: 48px;
  flex-shrink: 0;
  display: flex;
  align-items: stretch;
  border-bottom: 1px solid #d5d5d5;
  color: #3c4049;
`;

const ToolGroup = styled.div`
  width: ${({ $width }) => $width}px;
  flex-shrink: 0;
  display: flex;
  align-items: center;
  padding-left: ${({ $start }) => $start}px;
  border-right: 1px solid #d9d9d9;
`;

const Tool = styled.button`
  width: 33px;
  height: 36px;
  flex-shrink: 0;
  display: flex;
  align-items: center;
  justify-content: center;
  font-family: Roboto, sans-serif;
  font-size: 19px;
  font-weight: ${({ $heavy }) => ($heavy ? 800 : 400)};
  color: ${({ $dim }) => ($dim ? '#b0b0b0' : '#3c4049')};
`;

const Caret = styled(MdArrowDropDown)`
  width: 22px;
`;

const SizeInput = styled.input`
  width: 34px;
  font-size: 18px;
`;

const SizeCaret = styled(MdArrowDropDown)`
  margin-left: auto;
  margin-right: 10px;
`;

const ColorLetter = styled.span`
  width: 24px;
  border-bottom: 5px solid #000;
  line-height: 22px;
  font-size: 21px;
`;

const FormulaInput = styled.input`
  flex: 1;
  min-width: 0;
  padding-left: 12px;
  border-bottom: 2px solid #dcdde0;
  font-family: "Liberation Sans", sans-serif;
  font-size: 18px;
`;

const SheetArea = styled.div`
  flex: 1;
  min-height: 0;
  display: flex;
`;

const SheetView = styled.div`
  flex: 1;
  min-width: 0;
  overflow: hidden;
`;

const VerticalTrack = styled.div`
  width: 20px;
  background: #f3f3f3;
`;

const HorizontalTrack = styled.div`
  height: 20px;
  flex-shrink: 0;
  display: flex;
  justify-content: flex-end;
  background: #f2f2f2;
`;

const TrackCorner = styled.div`
  width: 21px;
  border-top: 1px solid #d9d9d9;
  border-left: 1px solid #d9d9d9;
`;

const SheetTable = styled.table`
  width: 100%;
  table-layout: fixed;
  border-collapse: separate;
  border-spacing: 0;
  font-family: "Liberation Sans", "Noto Sans CJK SC", sans-serif;
  text-spacing-trim: space-all;
`;

const SheetCol = styled.col`
  width: ${({ $width }) => $width}px;
`;

const GridRow = styled.tr`
  height: ${({ $height }) => $height}px;
`;

const HeadCell = styled.th`
  padding: 0;
  border-right: 1px solid #d4d5d8;
  border-bottom: 1px solid #d0d1d4;
  background: ${({ $selected }) => ($selected ? '#dfe1e5' : '#f6f8fa')};
  font-size: 15px;
  line-height: 18px;
  font-weight: 400;
  color: #5f6266;
`;

const ColHead = styled(HeadCell)``;

const RowHead = styled(HeadCell)`
  border-bottom-color: #dcdfe2;
  font-size: 14px;
`;

const Corner = styled.td`
  border-right: 1px solid #d4d5d8;
  border-bottom: 1px solid #d0d1d4;
`;

const Cell = styled.td`
  padding: ${({ $middle }) => ($middle ? '2px 0 0' : '0 5px 1px')};
  border-right: 1px solid ${({ $boxed, $side }) => ($boxed || $side ? '#000' : '#dfdfdf')};
  border-bottom: 1px solid ${({ $boxed, $under }) => ($boxed || $under ? '#000' : '#dfdfdf')};
  overflow: hidden;
  white-space: nowrap;
  vertical-align: ${({ $middle }) => ($middle ? 'middle' : 'bottom')};
  text-align: ${({ $align }) => $align || 'left'};
  font-size: 17px;
  line-height: 22px;
  color: #000;
`;

const TitleCell = styled(Cell)`
  font-size: 26px;
  font-weight: 700;
  line-height: 30px;
  text-align: center;
`;

const NoteCell = styled(Cell)`
  padding: 3px 5px 0 29px;
`;

const SelectedCell = styled(Cell)`
  position: relative;
  overflow: visible;
  background: #edf2fc;
  border-color: #2e62b5;
  box-shadow: -1px -1px 0 #2e62b5;
`;

const Handle = styled.span`
  position: absolute;
  right: -5px;
  bottom: -5px;
  z-index: 1;
  width: 9px;
  height: 9px;
  background: #1f66cf;
`;

const BottomBar = styled.footer`
  height: 50px;
  flex-shrink: 0;
  display: flex;
  align-items: center;
  padding: 0 32px 0 59px;
  border-top: 1px solid #cfcfcf;
  background: linear-gradient(#f1f1f1, #dcdcdc);
`;

const BottomButton = styled.button`
  width: 46px;
  display: flex;
  justify-content: center;
  padding-top: 3px;
`;

const SheetTab = styled.button`
  width: 126px;
  align-self: stretch;
  display: flex;
  align-items: center;
  justify-content: center;
  gap: 10px;
  margin-left: 10px;
  padding-left: 8px;
  border-left: 1px solid #bdbdbd;
  border-right: 1px solid #bdbdbd;
  background: #f7f8f7;
  font-size: 20px;
  color: #38803c;
`;

const TotalBox = styled.div`
  height: 40px;
  display: flex;
  align-items: center;
  gap: 12px;
  margin-left: auto;
  padding: 0 7px 0 11px;
  border-radius: 4px;
  background: #fff;
  box-shadow: 0 2px 8px rgba(0, 0, 0, 0.15);
`;

const TotalSelect = styled.select`
  appearance: none;
  font-family: "Liberation Sans", "Noto Sans CJK SC", sans-serif;
  font-size: 21px;
`;

const DownloadPanel = styled.aside`
  position: absolute;
  top: 108px;
  right: 73px;
  width: 432px;
  padding: 11px 0;
  border-radius: 16px;
  background: #fff;
  box-shadow: 0 0 1px rgba(0, 0, 0, 0.5), 0 4px 18px rgba(0, 0, 0, 0.3);
`;

const DownloadItem = styled.div`
  height: 70px;
  display: flex;
  align-items: flex-start;
  gap: 23px;
  padding: 13px 33px 0 32px;
  background: ${({ $active }) => ($active ? '#eeeeef' : 'transparent')};

  > svg {
    margin-top: 2px;
  }
`;

const FileText = styled.div`
  flex: 1;
  min-width: 0;
`;

const FileName = styled.div`
  overflow: hidden;
  white-space: nowrap;
  font-size: 17px;
  font-weight: 600;
  line-height: 24px;
`;

const FileInfo = styled.div`
  font-size: 15px;
  line-height: 24px;
  color: #474747;
`;

const FileActions = styled.div`
  display: flex;
  gap: 24px;
  margin-top: 3px;
  margin-left: -6px;
`;

const PointerSpot = styled.div`
  position: absolute;
  top: 48px;
  left: 231px;
`;

const Dock = styled.footer`
  height: 86px;
  flex-shrink: 0;
  display: grid;
  grid-template-columns: repeat(20, 71fr) 34fr 64fr 80fr;
  margin: 5px 59px 7px 60px;
  padding: 0 1px;
  border: 1px solid #33485a;
  border-radius: 26px;
  background: linear-gradient(100deg, #182331, #1c2f3d);
`;

const DockItem = styled.button`
  position: relative;
  display: flex;
  justify-content: center;
  padding-top: 9px;
`;

const DockArt = styled.svg`
  width: 60px;
  height: 60px;
  overflow: visible;
`;

const RunDot = styled.span`
  position: absolute;
  bottom: 2px;
  width: 5px;
  height: 5px;
  border-radius: 50%;
  background: #a5b2bf;
`;

const DockRule = styled.span`
  justify-self: center;
  width: 1px;
  margin: 9px 0;
  background: #51616f;
`;
